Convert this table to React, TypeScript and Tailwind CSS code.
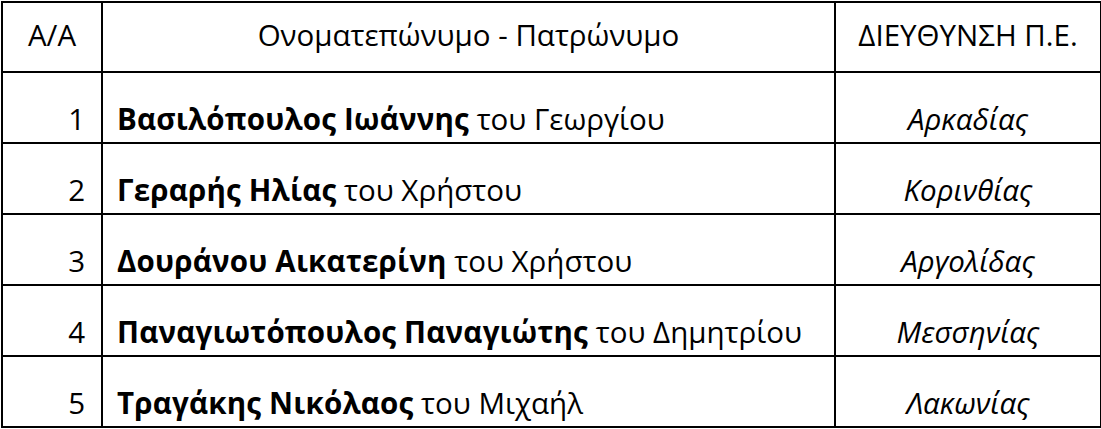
import React from 'react';

const ROWS = [
    { n: 1, name: 'Βασιλόπουλος Ιωάννης', father: 'του Γεωργίου', area: 'Αρκαδίας' },
    { n: 2, name: 'Γεραρής Ηλίας', father: 'του Χρήστου', area: 'Κορινθίας' },
    { n: 3, name: 'Δουράνου Αικατερίνη', father: 'του Χρήστου', area: 'Αργολίδας' },
    { n: 4, name: 'Παναγιωτόπουλος Παναγιώτης', father: 'του Δημητρίου', area: 'Μεσσηνίας' },
    { n: 5, name: 'Τραγάκης Νικόλαος', father: 'του Μιχαήλ', area: 'Λακωνίας' },
];

export default function App() {
    return (
        <div className="w-[1101px] h-[429px] bg-white pt-px pl-px font-['Open_Sans',sans-serif] text-black text-[29.5px]">
            <table className="border-collapse w-[1099px] table-fixed">
                <colgroup>
                    <col className="w-[100px]" />
                    <col className="w-[733px]" />
                    <col className="w-[266px]" />
                </colgroup>
                <thead>
                    <tr className="h-[70px]">
                        <th className="border-2 border-black font-normal text-center align-middle pb-1">Α/Α</th>
                        <th className="border-2 border-black font-normal text-center align-middle pb-1">
                            Ονοματεπώνυμο - Πατρώνυμο
                        </th>
                        <th className="border-2 border-black font-normal text-center align-middle pb-1">
                            ΔΙΕΥΘΥΝΣΗ Π.Ε.
                        </th>
                    </tr>
                </thead>
                <tbody>
                    {ROWS.map((r) => (
                        <tr key={r.n} className="h-[71px]">
                            <td className="border-2 border-black text-right align-bottom pr-4 pb-[3px] leading-[40px]">
                                {r.n}
                            </td>
                            <td className="border-2 border-black text-left align-bottom pl-[14px] pb-[3px] leading-[40px] whitespace-nowrap">
                                <span className="font-bold tracking-[0.2px]">{r.name}</span> {r.father}
                            </td>
                            <td className="border-2 border-black text-center align-bottom pb-[3px] leading-[40px] italic">
                                {r.area}
                            </td>
                        </tr>
                    ))}
                </tbody>
            </table>
        </div>
    );
}
